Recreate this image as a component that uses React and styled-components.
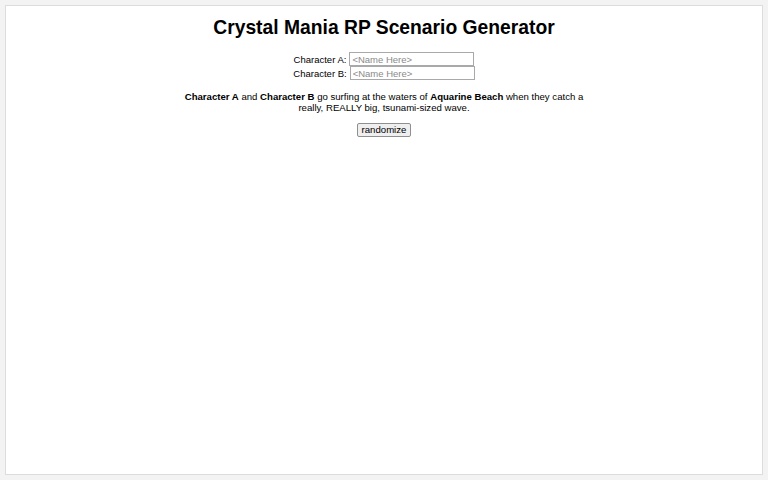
import { useState } from "react";
import styled, { createGlobalStyle } from "styled-components";

const GlobalStyle = createGlobalStyle`
  html, body {
    margin: 0;
    height: 100%;
    background: #f3f3f3;
  }
  body {
    font-family: "Liberation Sans", Arial, sans-serif;
    color: #000;
  }
  #root {
    height: 100%;
  }
`;

const Page = styled.div`
  box-sizing: border-box;
  height: 100%;
  padding: 5px;
`;

const Card = styled.div`
  box-sizing: border-box;
  height: 100%;
  background: #fff;
  border: 1px solid #dcdcdc;
  display: flex;
  flex-direction: column;
  align-items: center;
  padding-top: 10px;
`;

const Title = styled.h1`
  margin: 0 0 12px;
  font-size: 19.3px;
  font-weight: bold;
  line-height: 24px;
`;

const Form = styled.div`
  display: flex;
  flex-direction: column;
  align-items: center;
`;

const Field = styled.label`
  display: flex;
  align-items: center;
  gap: 3px;
  font-size: 9.5px;
`;

const NameInput = styled.input`
  box-sizing: border-box;
  width: 125px;
  height: 14px;
  padding: 0 2px;
  font-family: inherit;
  font-size: 9.5px;
  border: 1px solid #a9a9a9;
  border-radius: 0;
  outline: none;

  &::placeholder {
    color: #8a8a8a;
  }
`;

const Scenario = styled.p`
  margin: 11px 0 0;
  max-width: 400px;
  text-align: center;
  font-size: 9.6px;
  line-height: 11px;
`;

const RandomButton = styled.button`
  margin-top: 10px;
  height: 14px;
  padding: 0 4px;
  font-family: inherit;
  font-size: 9.6px;
  line-height: 12px;
  background: #efefef;
  border: 1px solid #8f8f8f;
  border-radius: 2px;
`;

export default function App() {
  const [a, setA] = useState("");
  const [b, setB] = useState("");

  return (
    <>
      <GlobalStyle />
      <Page>
        <Card>
          <Title>Crystal Mania RP Scenario Generator</Title>
          <Form>
            <Field>
              Character A:
              <NameInput
                placeholder="<Name Here>"
                value={a}
                onChange={(e) => setA(e.target.value)}
              />
            </Field>
            <Field>
              Character B:
              <NameInput
                placeholder="<Name Here>"
                value={b}
                onChange={(e) => setB(e.target.value)}
              />
            </Field>
          </Form>
          <Scenario>
            <b>{a || "Character A"}</b> and <b>{b || "Character B"}</b> go
            surfing at the waters of <b>Aquarine Beach</b> when they catch a
            really, REALLY big, tsunami-sized wave.
          </Scenario>
          <RandomButton>randomize</RandomButton>
        </Card>
      </Page>
    </>
  );
}
